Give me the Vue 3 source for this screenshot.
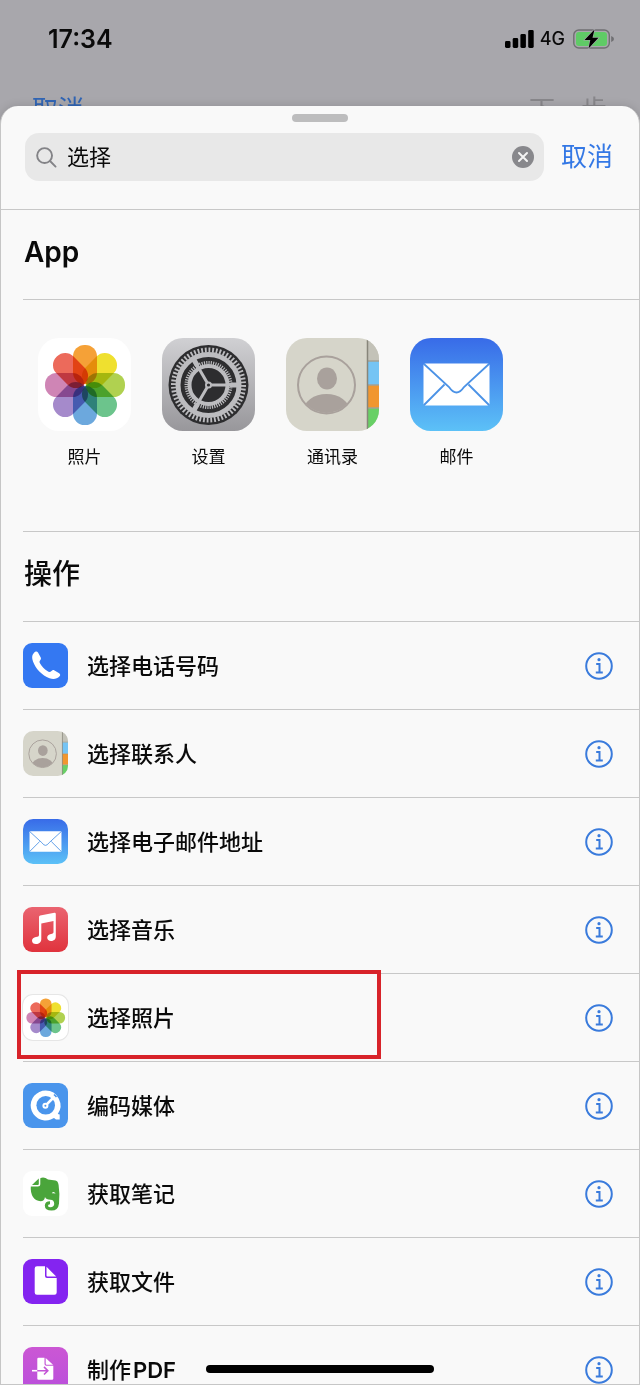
<script setup>
import { ref } from 'vue'

const query = ref('选择')

const apps = [
  { icon: 'photos', name: '照片' },
  { icon: 'settings', name: '设置' },
  { icon: 'contacts', name: '通讯录' },
  { icon: 'mail', name: '邮件' },
]

const actions = [
  { icon: 'phone', name: '选择电话号码' },
  { icon: 'contacts', name: '选择联系人' },
  { icon: 'mail', name: '选择电子邮件地址' },
  { icon: 'music', name: '选择音乐' },
  { icon: 'photos', name: '选择照片', marked: true },
  { icon: 'quicktime', name: '编码媒体' },
  { icon: 'evernote', name: '获取笔记' },
  { icon: 'file', name: '获取文件' },
  { icon: 'pdf', name: '制作', format: 'PDF' },
]

const petals = ['#f5a137', '#efe02f', '#b0d150', '#6cc48c', '#6ca8dd', '#a58acb', '#cf85b5', '#ec6a5b']
</script>

<template>
  <div class="screen">
    <svg class="sprite" aria-hidden="true">
      <defs>
        <linearGradient id="g-settings" x1="0" y1="0" x2="0" y2="1">
          <stop offset="0" stop-color="#d0d0d3" />
          <stop offset="1" stop-color="#98979b" />
        </linearGradient>
        <linearGradient id="g-mail" x1="0" y1="0" x2="0" y2="1">
          <stop offset="0" stop-color="#386be8" />
          <stop offset="1" stop-color="#5cc1f7" />
        </linearGradient>
        <linearGradient id="g-music" x1="0" y1="0" x2="0" y2="1">
          <stop offset="0" stop-color="#ea6470" />
          <stop offset="1" stop-color="#e0333d" />
        </linearGradient>
        <linearGradient id="g-pdf" x1="0" y1="0" x2="0" y2="1">
          <stop offset="0" stop-color="#cb57d4" />
          <stop offset="1" stop-color="#b94fdc" />
        </linearGradient>
        <clipPath id="c-tile"><rect width="93" height="93" rx="21" /></clipPath>
        <clipPath id="c-face"><circle cx="40.5" cy="47" r="28" /></clipPath>
      </defs>

      <symbol id="icon-photos" viewBox="0 0 93 93">
        <rect width="93" height="93" rx="21" fill="#fff" />
        <g class="petals">
          <rect
            v-for="(color, i) in petals"
            :key="color"
            class="petal"
            x="35"
            y="7"
            width="24"
            height="39"
            rx="11.5"
            :fill="color"
            :transform="`rotate(${i * 45} 47 47)`"
          />
        </g>
      </symbol>

      <symbol id="icon-settings" viewBox="0 0 93 93">
        <rect width="93" height="93" rx="21" fill="url(#g-settings)" />
        <circle cx="46.5" cy="47" r="40" fill="#2d2d2f" />
        <g fill="none" stroke="#bcbcbf">
          <circle cx="46.5" cy="47" r="35" stroke-width="5" pathLength="120" stroke-dasharray="1 1" />
          <circle cx="46.5" cy="47" r="30.5" stroke-width="5" />
          <circle cx="46.5" cy="47" r="22" stroke-width="4" pathLength="120" stroke-dasharray="1 1" />
          <circle cx="46.5" cy="47" r="19" stroke-width="4" />
          <path d="M46.5 47H76M46.5 47L31.7 21.4M46.5 47L31.7 72.6" stroke-width="3" />
          <path d="M70 47H76M34.7 26.6L31.7 21.4M34.7 67.4L31.7 72.6" stroke-width="5" stroke-linecap="round" />
        </g>
        <circle cx="46.5" cy="47" r="3.5" fill="#bcbcbf" />
        <circle cx="46.5" cy="47" r="1.6" fill="#2d2d2f" />
      </symbol>

      <symbol id="icon-contacts" viewBox="0 0 93 93">
        <g clip-path="url(#c-tile)">
          <rect width="93" height="93" fill="#d6d5ca" />
          <rect x="81" width="12" height="22.5" fill="#c3c2b8" />
          <rect x="81" y="23.5" width="12" height="23" fill="#75c4f4" />
          <rect x="81" y="47.5" width="12" height="22" fill="#f1962f" />
          <rect x="81" y="70.5" width="12" height="23" fill="#68d066" />
          <path d="M81 23H93M81 47H93M81 70H93" stroke="#8a8778" stroke-width="1" />
          <path d="M81.5 0V93" stroke="#87857a" stroke-width="1.5" />
        </g>
        <circle cx="40.5" cy="47" r="28.5" fill="none" stroke="#a9a19c" stroke-width="2" />
        <ellipse cx="41" cy="40.5" rx="10" ry="11" fill="#a9a19c" />
        <ellipse cx="40.5" cy="73" rx="23" ry="17" fill="#a9a19c" clip-path="url(#c-face)" />
      </symbol>

      <symbol id="icon-mail" viewBox="0 0 93 93">
        <rect width="93" height="93" rx="21" fill="url(#g-mail)" />
        <rect x="13.5" y="25.5" width="66" height="42" rx="2" fill="#fff" />
        <path
          d="M14 26L39 49Q46.5 60 54 49L79 26M34.5 46.5L14 67M58.5 46.5L79 67"
          fill="none"
          stroke="#4b92e6"
          stroke-width="1.8"
        />
      </symbol>

      <symbol id="icon-phone" viewBox="0 0 45 45">
        <rect width="45" height="45" rx="9" fill="#3478f2" />
        <path
          d="M10.5 10.5C8.800 12.500 8.800 15 10 18.500C12.500 25.500 19 32.500 26.500 35.300C30.500 36.600 34 36 36.600 33.300C37.600 32.200 37.300 31.200 36.200 30.300L31.500 27.400C30.300 26.700 29.400 27 28.500 27.900C27 29.500 26 29.300 24.300 28.100C21.300 26 19 23.500 17.100 20.500C16.200 19 16.400 18.300 17.200 17.300C18.100 16.300 18.200 15.400 17.600 14.200L15 9.600C13.800 8 12.200 8.400 10.500 10.500Z"
          fill="#fff"
        />
      </symbol>

      <symbol id="icon-music" viewBox="0 0 45 45">
        <rect width="45" height="45" rx="9" fill="url(#g-music)" />
        <path
          d="M16 10Q16 8.800 17.200 8.500L31.400 5.800Q32.800 5.600 32.800 7V29.500C32.800 32.500 30.500 34 28 34C25.700 34 24.200 32.500 24.200 30.700C24.200 28.600 25.800 27.400 28 27C29.800 26.700 30.500 26.300 30.500 25V14L18.300 16.400V32C18.300 35.300 16 37 13 37C10.600 37 9 35.700 9 33.700C9 31.600 10.700 30.500 12.900 30.100C15 29.700 16 29.400 16 28Z"
          fill="#fff"
        />
      </symbol>

      <symbol id="icon-quicktime" viewBox="0 0 45 45">
        <rect width="45" height="45" rx="9" fill="#4a95ec" />
        <path d="M22.700 7.500A15 15 0 1 0 27.800 36.600L31 35L33 36.600H36.700V31.500L34.800 31A15 15 0 0 0 22.700 7.500Z" fill="#fff" />
        <circle cx="22.700" cy="22.300" r="9.300" fill="#4a95ec" />
        <path d="M31 11.500L33.500 14" stroke="#4a95ec" stroke-width="1.600" />
        <path d="M22.500 22.700L30.500 14.500" stroke="#fff" stroke-width="2.600" stroke-linecap="round" />
        <circle cx="22.400" cy="22.800" r="3" fill="#fff" />
        <circle cx="22.400" cy="22.800" r="1" fill="#4a95ec" />
      </symbol>

      <symbol id="icon-evernote" viewBox="0 0 45 45">
        <rect width="45" height="45" rx="9" fill="#fff" />
        <path d="M9 14L15.800 7.600V13Q15.800 14 14.800 14Z" fill="#4aa53b" />
        <path
          d="M7.800 15.500H14.800Q17.300 15.500 17.300 13V7.300Q19.500 6 22.500 7L25 8.500L32.500 9.600Q35 10.100 35.600 14Q37 23 36 32.500Q35.300 39.600 28.500 39.600Q21.800 39.300 21.800 34.500Q22 30.400 27 30.300V33.300Q24.800 33.400 25 35Q25.300 36.300 28 36.200Q31.300 35.800 31.200 32.500Q31 29 27.500 28.800Q23 28.600 22 26Q21.300 30.300 17.500 30.300Q12.500 29.800 10 26Q7.300 21.500 7.800 15.500Z"
          fill="#4aa53b"
        />
        <path d="M28.800 22.300Q30.500 19.600 32.600 22.600Q30.800 22 28.800 22.300Z" fill="#fff" />
      </symbol>

      <symbol id="icon-file" viewBox="0 0 45 45">
        <rect width="45" height="45" rx="9" fill="#8424f0" />
        <path d="M14 7.300H22V17Q22 19 24 19H33.700V33.500Q33.700 35.800 31.400 35.800H14Q11.700 35.800 11.700 33.500V9.600Q11.700 7.300 14 7.300Z" fill="#fff" />
        <path d="M23.500 7.800L33.200 17.500H24.500Q23.500 17.500 23.500 16.500Z" fill="#fff" />
      </symbol>

      <symbol id="icon-pdf" viewBox="0 0 45 45">
        <rect width="45" height="45" rx="9" fill="url(#g-pdf)" />
        <path d="M15.500 10.700H21.500V17Q21.500 18.800 23.300 18.800H30.300V31.500Q30.300 32.700 29.100 32.700H15.500Q14.300 32.700 14.300 31.500V11.900Q14.300 10.700 15.500 10.700Z" fill="#fff" />
        <path d="M22.700 11L30 17.800H23.700Q22.700 17.800 22.700 16.800Z" fill="#fff" />
        <path d="M9 23.700H14.300" stroke="#fff" stroke-width="1.600" />
        <path d="M14.300 23.700H24.500M21 19.900L24.800 23.700L21 27.500" fill="none" stroke="#c455d6" stroke-width="1.600" />
      </symbol>
    </svg>

    <header class="status">
      <time class="clock">17:34</time>
      <div class="indicators">
        <svg class="signal" viewBox="0 0 29 18" aria-hidden="true">
          <rect x="0" y="11" width="5.500" height="7" rx="1.400" />
          <rect x="7.700" y="8" width="5.500" height="10" rx="1.400" />
          <rect x="15.400" y="4" width="5.500" height="14" rx="1.400" />
          <rect x="23.200" y="0" width="5.500" height="18" rx="1.400" />
        </svg>
        <span class="network">4G</span>
        <svg class="battery" viewBox="0 0 41 20" aria-hidden="true">
          <rect x="0.800" y="1" width="35.500" height="18" rx="5" fill="none" stroke="#6f6f72" stroke-width="1.400" />
          <rect x="3" y="3" width="31" height="14" rx="3" fill="#5fcb66" />
          <path d="M38.200 7Q41 8 41 10T38.200 13Z" fill="#6f6f72" />
          <path d="M21.500 0.500L11.500 11H17.300L15.500 19.500L25.500 8.800H19.500Z" fill="#000" stroke="#a8a7ac" stroke-width="1.200" paint-order="stroke" />
        </svg>
      </div>
    </header>

    <nav class="behind">
      <span>取消</span>
      <span class="next">下一步</span>
    </nav>

    <main class="sheet">
      <div class="top">
        <div class="grabber"></div>
        <form class="search" @submit.prevent>
          <div class="field">
            <svg class="lens" viewBox="0 0 22 22" aria-hidden="true">
              <circle cx="9" cy="9" r="7.800" />
              <path d="M14.700 14.700L20.500 20.500" />
            </svg>
            <input v-model="query" type="text" aria-label="搜索" />
            <button class="clear" type="button" aria-label="清除" @click="query = ''">
              <svg viewBox="0 0 22 22" aria-hidden="true">
                <circle cx="11" cy="11" r="11" />
                <path d="M7 7L15 15M15 7L7 15" />
              </svg>
            </button>
          </div>
          <button class="cancel" type="button">取消</button>
        </form>
      </div>

      <section>
        <h2>App</h2>
        <ul class="apps">
          <li v-for="app in apps" :key="app.name">
            <button class="app" type="button">
              <svg aria-hidden="true"><use :href="`#icon-${app.icon}`" /></svg>
              <span>{{ app.name }}</span>
            </button>
          </li>
        </ul>
      </section>

      <section>
        <h2 lang="zh">操作</h2>
        <ul class="actions">
          <li v-for="action in actions" :key="action.name" :class="{ marked: action.marked }">
            <button class="action" type="button">
              <svg :class="{ outlined: action.icon === 'photos' }" aria-hidden="true"><use :href="`#icon-${action.icon}`" /></svg>
              <span>{{ action.name }}<b v-if="action.format">{{ action.format }}</b></span>
            </button>
            <button class="info" type="button" :aria-label="`${action.name}详情`">
              <svg viewBox="0 0 28 28" aria-hidden="true">
                <circle cx="14" cy="14" r="12.800" />
                <path d="M11.200 11.900H14.500V20.300M10.800 20.400H17.800" />
                <circle class="dot" cx="14" cy="7.700" r="1.600" />
              </svg>
            </button>
          </li>
        </ul>
      </section>
    </main>

    <div class="home"></div>
  </div>
</template>

<style>
body {
  margin: 0;
}
</style>

<style scoped>
.screen {
  position: relative;
  display: flex;
  flex-direction: column;
  height: 100vh;
  overflow: hidden;
  background: #a8a7ac;
  color: #0a0a0a;
  font-family: Inter, "Noto Sans CJK SC", sans-serif;
}

.sprite {
  position: absolute;
  width: 0;
  height: 0;
}

.petals {
  isolation: isolate;
}

.petal {
  mix-blend-mode: multiply;
}

button,
input {
  margin: 0;
  padding: 0;
  border: 0;
  background: none;
  color: inherit;
  font: inherit;
}

svg {
  display: block;
  flex: none;
}

ul {
  margin: 0;
  padding: 0;
  list-style: none;
}

.status {
  display: flex;
  flex: none;
  align-items: center;
  justify-content: space-between;
  height: 77px;
  padding: 0 26px 0 48px;
}

.clock {
  font-size: 25px;
  font-weight: 600;
}

.indicators {
  display: flex;
  align-items: center;
}

.signal {
  width: 29px;
  height: 18px;
}

.network {
  margin: 0 8px 0 6px;
  font-size: 18px;
  font-weight: 500;
}

.battery {
  width: 41px;
  height: 20px;
}

.behind {
  display: flex;
  flex: none;
  justify-content: space-between;
  padding: 20px 33px 0 32px;
  color: #3165b4;
  font-size: 26px;
  line-height: 26px;
}

.next {
  color: #88878b;
}

/* The sheet slides up over the lower half of the bar behind it. */
.sheet {
  z-index: 1;
  flex: 1;
  min-height: 0;
  margin-top: -17px;
  overflow: hidden;
  border: 1px solid #c6c6c6;
  border-top: 0;
  border-radius: 18px 18px 0 0;
  background: #f9f9f9;
  box-shadow: 0 0 10px rgba(0, 0, 0, 0.14);
}

.top {
  padding: 8px 24px 28px;
  border-bottom: 1px solid #c8c8c8;
}

.grabber {
  width: 56px;
  height: 8px;
  margin: 0 auto 11px;
  border-radius: 4px;
  background: #bdbdbe;
}

.search {
  display: flex;
  align-items: center;
  gap: 17px;
}

.field {
  display: flex;
  flex: 1;
  align-items: center;
  min-width: 0;
  height: 48px;
  padding: 0 10px 0 11px;
  border-radius: 14px;
  background: #e8e8e8;
}

.lens {
  width: 21px;
  height: 21px;
  fill: none;
  stroke: #838387;
  stroke-width: 2;
  stroke-linecap: round;
}

.field input {
  flex: 1;
  min-width: 0;
  margin-left: 10px;
  font-size: 22px;
  line-height: 32px;
  outline: none;
}

.clear svg {
  width: 22px;
  height: 22px;
  fill: #88888c;
  stroke: #f4f4f4;
  stroke-width: 2;
  stroke-linecap: round;
}

.clear circle {
  stroke: none;
}

.cancel {
  margin-right: 2px;
  color: #3478e5;
  font-size: 26px;
  line-height: 36px;
}

h2 {
  margin: 0 0 0 22px;
  padding: 22px 0 27px 1px;
  border-bottom: 1px solid #c8c8c8;
  font-size: 28px;
  font-weight: 600;
  line-height: 40px;
}

h2:lang(zh) {
  font-weight: 500;
}

.apps {
  display: flex;
  gap: 31px;
  margin-left: 22px;
  padding: 38px 15px 62px;
  border-bottom: 1px solid #c8c8c8;
}

.app {
  display: flex;
  flex-direction: column;
  align-items: center;
  gap: 14px;
  width: 93px;
  font-size: 17px;
  line-height: 24px;
}

.app svg {
  width: 93px;
  height: 93px;
}

.actions {
  margin-left: 22px;
}

.actions li {
  position: relative;
  display: flex;
  align-items: center;
  height: 87px;
  padding-right: 26px;
  border-bottom: 1px solid #c8c8c8;
}

.marked::after {
  position: absolute;
  top: -4px;
  left: -6px;
  box-sizing: border-box;
  width: 364px;
  height: 89px;
  border: 4px solid #d8232a;
  content: "";
  pointer-events: none;
}

.action {
  display: flex;
  flex: 1;
  align-items: center;
  gap: 19px;
  font-size: 22px;
  font-weight: 500;
  line-height: 32px;
  text-align: left;
}

.action b {
  margin-left: 2px;
  font-weight: 600;
}

.action svg {
  width: 45px;
  height: 45px;
}

.action .outlined {
  border-radius: 10px;
  box-shadow: 0 0 0 1px #e6e6e6;
}

.info svg {
  width: 28px;
  height: 28px;
  fill: none;
  stroke: #3a7bdc;
  stroke-width: 2;
}

.info .dot {
  fill: #3a7bdc;
  stroke: none;
}

.home {
  position: absolute;
  z-index: 2;
  bottom: 12px;
  left: 50%;
  width: 228px;
  height: 8px;
  margin-left: -114px;
  border-radius: 4px;
  background: #000;
}
</style>
